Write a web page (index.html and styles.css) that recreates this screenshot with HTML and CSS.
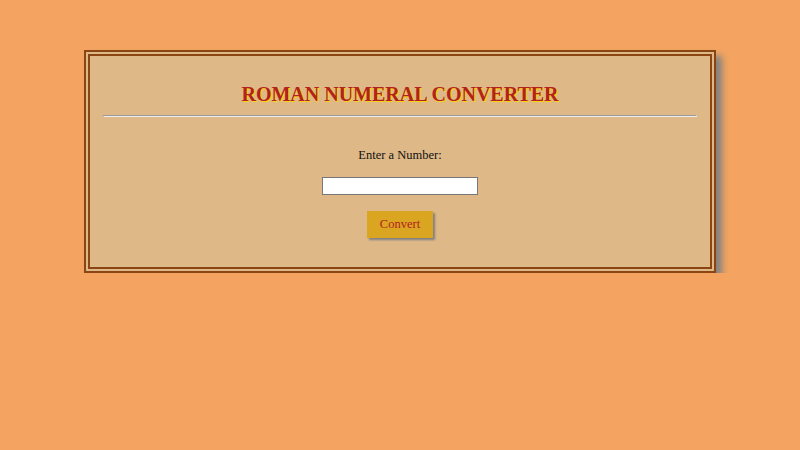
FILE: index.html
```html
<!DOCTYPE html>
<html lang="en">
<head>
  <meta charset="UTF-8">
  <title>Roman Numeral Converter</title>
  <meta name="viewport" content="width=device-width, initial-scale=1.0">
  <link rel="stylesheet" href="styles.css">
</head>
<body>

  <div class="converter">
    <h1>ROMAN NUMERAL CONVERTER</h1>
    <hr>

    <label for="number" class="prompt">Enter a Number:</label>
    <input type="text" id="number" class="number-input">

    <button class="convert-btn" id="convert">Convert</button>
    <div class="result" id="result"></div>
  </div>

  <script>
    function toRoman(num) {
      const table = [
        [1000, "M"], [900, "CM"], [500, "D"], [400, "CD"],
        [100, "C"], [90, "XC"], [50, "L"], [40, "XL"],
        [10, "X"], [9, "IX"], [5, "V"], [4, "IV"], [1, "I"]
      ];
      let out = "";
      for (const [value, sym] of table) {
        while (num >= value) {
          out += sym;
          num -= value;
        }
      }
      return out;
    }

    document.getElementById('convert').addEventListener('click', function () {
      const n = parseInt(document.getElementById('number').value, 10);
      const result = document.getElementById('result');
      if (isNaN(n) || n < 1 || n > 3999) {
        result.textContent = "Please enter a number from 1 to 3999";
      } else {
        result.textContent = toRoman(n);
      }
    });
  </script>

</body>
</html>
```

FILE: styles.css
```css
body {
  font-family: "Liberation Serif", "Times New Roman", serif;
  background: #f4a460;
  margin: 0;
  padding-top: 50px;
}

.converter {
  width: 632px;
  box-sizing: border-box;
  margin: 0 auto;
  padding: 13px 13px 29px;
  background: #deb887;
  border: 6px double #8b4513;
  box-shadow: 6px 6px 7px #808080;
  text-align: center;
}

h1 {
  font-size: 20px;
  color: #b22222;
  text-shadow: 1px 1px 1px #ffd700;
  margin: 14px 0 9px;
}

hr {
  margin: 0 0 31px;
}

.prompt {
  display: block;
  font-size: 12.5px;
  color: #111;
  margin-bottom: 14px;
}

.number-input {
  display: block;
  margin: 0 auto 16px;
  width: 156px;
  height: 18px;
  box-sizing: border-box;
  border: 1px solid #777;
  background: white;
}

.convert-btn {
  font-family: inherit;
  font-size: 12.5px;
  color: #b22222;
  background: #daa520;
  border: none;
  padding: 6px 13px;
  box-shadow: 2px 2px 2px #808080;
  cursor: pointer;
}

.result:not(:empty) {
  margin-top: 10px;
  font-size: 16px;
  font-weight: bold;
}
```
